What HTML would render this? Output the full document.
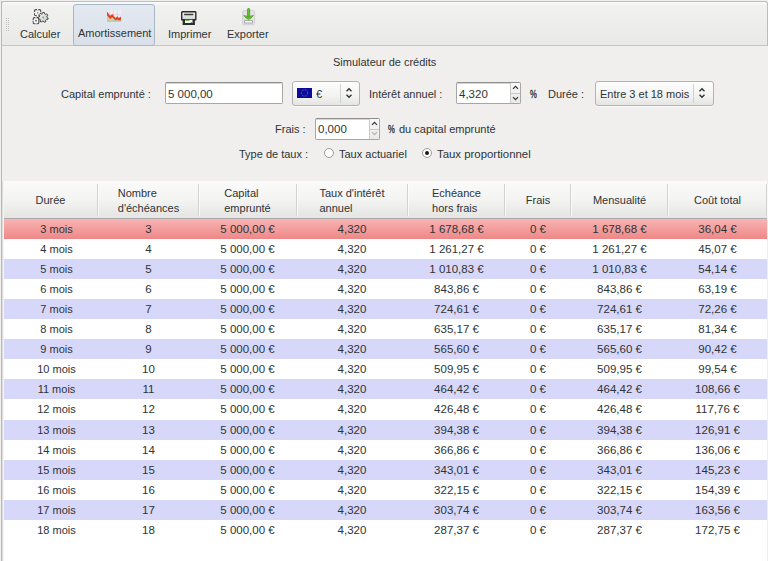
<!DOCTYPE html>
<html><head><meta charset="utf-8">
<style>

*{box-sizing:border-box}
html,body{margin:0;padding:0;width:768px;height:561px;overflow:hidden;background:#f0efed;font-family:"Liberation Sans",sans-serif;font-size:11px;color:#2e3436}
.a{position:absolute}
.t{position:absolute;white-space:nowrap;line-height:13px;font-size:11px}
#win{position:absolute;left:0;top:0;width:768px;height:561px}
#tb{position:absolute;left:1px;top:1px;width:767px;height:45px;border:1px solid #bdbdbd;border-bottom-color:#c6c6c4;border-radius:3px 3px 0 0;background:linear-gradient(#fbfbfb 0,#f1f1f0 4px,#e9e9e8 100%)}
#lline{position:absolute;left:1px;top:1px;width:1px;height:560px;background:#b9b9b9}
.tbtn{position:absolute;top:4px;height:42px;border-radius:3px}
.tbtn.on{border:1px solid #a9b7c9;background:linear-gradient(#e4e9f0,#d9e0ea)}
.entry{position:absolute;background:#fff;border:1px solid #a7a7a5;border-top-color:#8f8f8d;border-radius:2px;box-shadow:inset 0 1px 0 #d6d6d6}
.combo{position:absolute;border:1px solid #b3b3b1;border-radius:3px;background:linear-gradient(#fdfdfd,#f3f3f2 60%,#e4e4e3);box-shadow:0 1px 0 rgba(255,255,255,.6)}
.radio{position:absolute;width:10px;height:10px;border-radius:50%;border:1px solid #9a9a9a;background:#fff}
#tbl{position:absolute;left:2px;top:181px;width:765px;height:380px;background:#fff;border-left:1px solid #dedede;box-shadow:inset 1px 0 0 #f4f4f4}
#hdr{position:absolute;left:4px;top:181px;width:763px;height:38px;background:linear-gradient(#fafafa 0,#f4f4f3 50%,#e4e4e3 100%);border-bottom:1px solid #acaaaa}
.sep{position:absolute;top:184px;width:1px;height:32px;background:#d2d2d0;box-shadow:1px 0 0 rgba(255,255,255,.7)}
.row{position:absolute;left:4px;width:763px;height:20px}
.row.r{background:linear-gradient(#f8b4b4,#ee8787)}
.row.b{background:#d7d7fa}
.c{position:absolute;top:0;height:20px;line-height:20px;text-align:center;white-space:nowrap;padding-top:0}
.num{font-size:11.5px}

</style></head>
<body>
<div id="tb"></div><div id="lline"></div><svg class="a" style="left:5px;top:17px" width="6" height="16"><rect x="1" y="1" width="1" height="1" fill="#c2c2c2"/><rect x="1" y="3" width="1" height="1" fill="#c2c2c2"/><rect x="1" y="5" width="1" height="1" fill="#c2c2c2"/><rect x="1" y="7" width="1" height="1" fill="#c2c2c2"/><rect x="1" y="9" width="1" height="1" fill="#c2c2c2"/><rect x="1" y="11" width="1" height="1" fill="#c2c2c2"/><rect x="1" y="13" width="1" height="1" fill="#c2c2c2"/><rect x="3" y="1" width="1" height="1" fill="#c2c2c2"/><rect x="3" y="3" width="1" height="1" fill="#c2c2c2"/><rect x="3" y="5" width="1" height="1" fill="#c2c2c2"/><rect x="3" y="7" width="1" height="1" fill="#c2c2c2"/><rect x="3" y="9" width="1" height="1" fill="#c2c2c2"/><rect x="3" y="11" width="1" height="1" fill="#c2c2c2"/><rect x="3" y="13" width="1" height="1" fill="#c2c2c2"/></svg><div class="tbtn on" style="left:73px;width:82px"></div><svg class="a" style="left:31px;top:8px" width="18" height="17" viewBox="0 0 18 17">
<defs><linearGradient id="gg" x1="0" y1="0" x2="1" y2="1"><stop offset="0" stop-color="#f2f5f2"/><stop offset="1" stop-color="#c3cbc3"/></linearGradient></defs>
<rect x="3.5" y="1.6" width="6.3" height="6.1" rx="1.5" fill="#f6f6f6" stroke="#4a4a4a" stroke-width="1.1"/>
<path d="M6.65 1 v1.2 M6.65 7.1 v1.2 M2.9 4.65 h1.2 M9.2 4.65 h1.2" stroke="#efefef" stroke-width="1.3"/>
<path d="M6.65 3.9 v1.6 M5.85 4.7 h1.6" stroke="#888" stroke-width="0.8"/>
<rect x="2.2" y="9.6" width="5.6" height="6.2" rx="1.4" fill="#fbfbfb" stroke="#4a4a4a" stroke-width="1.1"/>
<path d="M5 9 v1.2 M5 15.2 v1.2 M1.6 12.7 h1.2" stroke="#efefef" stroke-width="1.2"/>
<circle cx="5" cy="12.7" r="0.9" fill="#666"/>
<path d="M16.10 9.52 L17.16 10.00 L16.64 11.71 L15.48 11.50 L14.54 12.52 L14.83 13.66 L13.16 14.31 L12.60 13.28 L11.22 13.17 L10.51 14.11 L8.96 13.21 L9.42 12.13 L8.64 10.98 L7.47 11.01 L7.20 9.25 L8.33 8.93 L8.74 7.60 L7.99 6.70 L9.20 5.40 L10.15 6.08 L11.45 5.57 L11.68 4.43 L13.46 4.56 L13.52 5.73 L14.72 6.43 L15.76 5.89 L16.77 7.37 L15.89 8.14Z" fill="url(#gg)" stroke="#454545" stroke-width="1" stroke-linejoin="round"/>
<circle cx="12.2" cy="9.4" r="1" fill="#9aa09a"/>
</svg><svg class="a" style="left:106px;top:10px" width="16" height="13" viewBox="0 0 16 13">
<rect x="1" y="0.2" width="14" height="10.5" fill="#f0eef7"/>
<path d="M3.4 0.2v10.4M7.6 0.2v10.4M11.4 0.2v10.4M1 4.6h14" stroke="#d6d2e2" stroke-width="0.7"/>
<path d="M1 5 L4.1 8.8 L6.4 7 L9.4 10.4 L11.4 9.4 L12.5 10.4 L15 10.4 L15 10.7 L1 10.7Z" fill="#c9d39a"/>
<path d="M1 1.6 L4.1 5.8 L6.4 3.9 L9.4 8.1 L11.4 6.2 L12.8 8.1 L15 6.6 L15 10.5 L12.5 10.5 L11.4 9.6 L9.4 10.5 L6.4 7.2 L4.1 9 L1 5.2 Z" fill="#e6421e"/>
<rect x="1" y="10.6" width="14" height="1" fill="#a3a9b3" opacity="0.8"/>
</svg><svg class="a" style="left:180px;top:10px" width="18" height="16" viewBox="0 0 18 16">
<defs><linearGradient id="pg" x1="0" y1="0" x2="0" y2="1"><stop offset="0" stop-color="#f4f4f4"/><stop offset="1" stop-color="#d4d4d4"/></linearGradient></defs>
<path d="M2.6 15 L2.6 8 L14.9 8 L14.9 15 Z" fill="#2c2c2c"/>
<path d="M1.7 2.4 Q1.7 1.8 2.4 1.8 L15.1 1.8 Q15.8 1.8 15.8 2.4 L15.8 9.8 L1.7 9.8 Z" fill="url(#pg)" stroke="#2b2b2b" stroke-width="1.4" stroke-linejoin="round"/>
<rect x="4" y="3.7" width="9.5" height="1.5" rx="0.7" fill="#3a3a3a"/>
<rect x="5" y="9.8" width="7.5" height="3.2" fill="#f6f6f6"/>
<path d="M5.5 10.5 h4" stroke="#74c043" stroke-width="1"/>
<rect x="10.8" y="12" width="1.4" height="1" fill="#4a90d9"/>
</svg><svg class="a" style="left:241px;top:8px" width="15" height="18" viewBox="0 0 15 18">
<rect x="1.6" y="2.5" width="12" height="14.2" rx="1.5" fill="#e2e2e2" stroke="#cfcfcf" stroke-width="0.9"/>
<rect x="3.7" y="12.6" width="7.8" height="2.4" fill="#fbfbfb" stroke="#9c9c9c" stroke-width="0.8"/>
<path d="M7.6 1.6 V9" stroke="#4f9f22" stroke-width="3" stroke-linecap="round"/>
<path d="M7.6 1.6 V9" stroke="#66c032" stroke-width="1.8" stroke-linecap="round"/>
<path d="M2.8 7.4 Q5 8.2 7.6 8.4 Q10.2 8.2 12.4 7.4 Q10.6 10.2 7.6 11.6 Q4.6 10.2 2.8 7.4Z" fill="#62bb2f" stroke="#4a9a1e" stroke-width="0.7"/>
</svg><div class="t" style="left:20px;top:28px;">Calculer</div>
<div class="t" style="left:78px;top:27px;">Amortissement</div>
<div class="t" style="left:168px;top:28px;">Imprimer</div>
<div class="t" style="left:227px;top:28px;">Exporter</div>
<div class="t" style="left:333px;top:56px;">Simulateur de crédits</div>
<div class="t" style="left:61px;top:88px;">Capital emprunté :</div>
<div class="entry" style="left:165px;top:82px;width:118px;height:22px"></div><div class="t" style="left:168px;top:88px;font-size:11.5px">5 000,00</div>
<div class="combo" style="left:292px;top:81px;width:68px;height:25px"></div><svg class="a" style="left:297px;top:88px" width="15" height="10"><rect width="15" height="10" fill="#0b0ba0"/><circle cx="7.5" cy="5" r="3.2" fill="none" stroke="#b8a640" stroke-width="0.7" stroke-dasharray="0.8,0.9"/></svg><div class="t" style="left:316px;top:88px;">€</div>
<div class="a" style="left:340px;top:84px;width:1px;height:19px;background:#d0d0ce"></div><svg class="a" style="left:345px;top:87px" width="9" height="12" viewBox="0 0 9 12"><path d="M1.5 4.3 L4 1.8 L6.5 4.3 M1.5 7.7 L4 10.2 L6.5 7.7" fill="none" stroke="#2e3436" stroke-width="1.4"/></svg><div class="t" style="left:369px;top:88px;">Intérêt annuel :</div>
<div class="entry" style="left:456px;top:82px;width:65px;height:22px"></div><div class="a" style="left:510px;top:83px;width:10px;height:20px;border-left:1px solid #c8c8c6;background:linear-gradient(#f8f8f8,#eaeaea)"></div><div class="a" style="left:511px;top:93px;width:9px;height:1px;background:#c8c8c6"></div><svg class="a" style="left:512px;top:85px" width="7" height="5"><path d="M1 3.8 L3.5 1.3 L6 3.8" fill="none" stroke="#2e3436" stroke-width="1.2"/></svg><svg class="a" style="left:512px;top:96px" width="7" height="5"><path d="M1 1.2 L3.5 3.7 L6 1.2" fill="none" stroke="#2e3436" stroke-width="1.2"/></svg><div class="t" style="left:459px;top:88px;font-size:11.5px">4,320</div>
<div class="t" style="left:530px;top:88px;transform:scaleX(0.7);transform-origin:0 0;-webkit-text-stroke:0.35px #2e3436">%</div>
<div class="t" style="left:548px;top:88px;">Durée :</div>
<div class="combo" style="left:595px;top:81px;width:119px;height:25px"></div><div class="t" style="left:600px;top:88px;">Entre 3 et 18 mois</div>
<div class="a" style="left:693px;top:84px;width:1px;height:19px;background:#d0d0ce"></div><svg class="a" style="left:698px;top:87px" width="9" height="12" viewBox="0 0 9 12"><path d="M1.5 4.3 L4 1.8 L6.5 4.3 M1.5 7.7 L4 10.2 L6.5 7.7" fill="none" stroke="#2e3436" stroke-width="1.4"/></svg><div class="t" style="left:275px;top:123px;">Frais :</div>
<div class="entry" style="left:315px;top:118px;width:65px;height:22px"></div><div class="a" style="left:369px;top:119px;width:10px;height:20px;border-left:1px solid #c8c8c6;background:linear-gradient(#f8f8f8,#eaeaea)"></div><div class="a" style="left:370px;top:129px;width:9px;height:1px;background:#c8c8c6"></div><svg class="a" style="left:371px;top:121px" width="7" height="5"><path d="M1 3.8 L3.5 1.3 L6 3.8" fill="none" stroke="#2e3436" stroke-width="1.2"/></svg><svg class="a" style="left:371px;top:131px" width="7" height="5"><path d="M1 1.2 L3.5 3.7 L6 1.2" fill="none" stroke="#b0b0b0" stroke-width="1.2"/></svg><div class="t" style="left:318px;top:123px;font-size:11.5px">0,000</div>
<div class="t" style="left:388px;top:123px;transform:scaleX(0.7);transform-origin:0 0;-webkit-text-stroke:0.35px #2e3436">%</div>
<div class="t" style="left:399px;top:123px;">du capital emprunté</div>
<div class="t" style="left:239px;top:148px;">Type de taux :</div>
<div class="radio" style="left:324px;top:148px"></div><div class="t" style="left:339px;top:148px;">Taux actuariel</div>
<div class="radio" style="left:422px;top:148px"></div><div class="a" style="left:424.8px;top:150.8px;width:4.4px;height:4.4px;border-radius:50%;background:#1a1a1a"></div><div class="t" style="left:437px;top:148px;font-size:11.4px">Taux proportionnel</div>
<div id="tbl"></div><div id="hdr"></div><div class="sep" style="left:97px"></div><div class="sep" style="left:198px"></div><div class="sep" style="left:296px"></div><div class="sep" style="left:407px"></div><div class="sep" style="left:504px"></div><div class="sep" style="left:570px"></div><div class="sep" style="left:667px"></div><div class="sep" style="left:766px"></div><div class="t" style="left:3px;width:95px;top:194px;text-align:center">Durée</div>
<div class="a" style="left:98px;width:101px;top:186px;display:flex;justify-content:center"><div style="line-height:15px;white-space:nowrap;text-align:left">Nombre<br>d'échéances</div></div>
<div class="a" style="left:199px;width:97px;top:186px;display:flex;justify-content:center"><div style="line-height:15px;white-space:nowrap;text-align:left">Capital<br>emprunté</div></div>
<div class="a" style="left:296px;width:112px;top:186px;display:flex;justify-content:center"><div style="line-height:15px;white-space:nowrap;text-align:left">Taux d'intérêt<br>annuel</div></div>
<div class="a" style="left:408px;width:97px;top:186px;display:flex;justify-content:center"><div style="line-height:15px;white-space:nowrap;text-align:left">Echéance<br>hors frais</div></div>
<div class="t" style="left:505px;width:66px;top:194px;text-align:center">Frais</div>
<div class="t" style="left:571px;width:97px;top:194px;text-align:center">Mensualité</div>
<div class="t" style="left:668px;width:99px;top:194px;text-align:center">Coût total</div>
<div class="row r" style="top:218.75px"></div><div class="c" style="left:15px;width:83px;top:218.75px">3 mois</div>
<div class="c num" style="left:98px;width:101px;top:218.75px">3</div>
<div class="c num" style="left:199px;width:97px;top:218.75px">5 000,00 €</div>
<div class="c num" style="left:296px;width:112px;top:218.75px">4,320</div>
<div class="c num" style="left:408px;width:97px;top:218.75px">1 678,68 €</div>
<div class="c num" style="left:505px;width:66px;top:218.75px">0 €</div>
<div class="c num" style="left:571px;width:97px;top:218.75px">1 678,68 €</div>
<div class="c num" style="left:668px;width:99px;top:218.75px">36,04 €</div>
<div class="row " style="top:238.83px"></div><div class="c" style="left:15px;width:83px;top:238.83px">4 mois</div>
<div class="c num" style="left:98px;width:101px;top:238.83px">4</div>
<div class="c num" style="left:199px;width:97px;top:238.83px">5 000,00 €</div>
<div class="c num" style="left:296px;width:112px;top:238.83px">4,320</div>
<div class="c num" style="left:408px;width:97px;top:238.83px">1 261,27 €</div>
<div class="c num" style="left:505px;width:66px;top:238.83px">0 €</div>
<div class="c num" style="left:571px;width:97px;top:238.83px">1 261,27 €</div>
<div class="c num" style="left:668px;width:99px;top:238.83px">45,07 €</div>
<div class="row b" style="top:258.91px"></div><div class="c" style="left:15px;width:83px;top:258.91px">5 mois</div>
<div class="c num" style="left:98px;width:101px;top:258.91px">5</div>
<div class="c num" style="left:199px;width:97px;top:258.91px">5 000,00 €</div>
<div class="c num" style="left:296px;width:112px;top:258.91px">4,320</div>
<div class="c num" style="left:408px;width:97px;top:258.91px">1 010,83 €</div>
<div class="c num" style="left:505px;width:66px;top:258.91px">0 €</div>
<div class="c num" style="left:571px;width:97px;top:258.91px">1 010,83 €</div>
<div class="c num" style="left:668px;width:99px;top:258.91px">54,14 €</div>
<div class="row " style="top:278.99px"></div><div class="c" style="left:15px;width:83px;top:278.99px">6 mois</div>
<div class="c num" style="left:98px;width:101px;top:278.99px">6</div>
<div class="c num" style="left:199px;width:97px;top:278.99px">5 000,00 €</div>
<div class="c num" style="left:296px;width:112px;top:278.99px">4,320</div>
<div class="c num" style="left:408px;width:97px;top:278.99px">843,86 €</div>
<div class="c num" style="left:505px;width:66px;top:278.99px">0 €</div>
<div class="c num" style="left:571px;width:97px;top:278.99px">843,86 €</div>
<div class="c num" style="left:668px;width:99px;top:278.99px">63,19 €</div>
<div class="row b" style="top:299.07px"></div><div class="c" style="left:15px;width:83px;top:299.07px">7 mois</div>
<div class="c num" style="left:98px;width:101px;top:299.07px">7</div>
<div class="c num" style="left:199px;width:97px;top:299.07px">5 000,00 €</div>
<div class="c num" style="left:296px;width:112px;top:299.07px">4,320</div>
<div class="c num" style="left:408px;width:97px;top:299.07px">724,61 €</div>
<div class="c num" style="left:505px;width:66px;top:299.07px">0 €</div>
<div class="c num" style="left:571px;width:97px;top:299.07px">724,61 €</div>
<div class="c num" style="left:668px;width:99px;top:299.07px">72,26 €</div>
<div class="row " style="top:319.15px"></div><div class="c" style="left:15px;width:83px;top:319.15px">8 mois</div>
<div class="c num" style="left:98px;width:101px;top:319.15px">8</div>
<div class="c num" style="left:199px;width:97px;top:319.15px">5 000,00 €</div>
<div class="c num" style="left:296px;width:112px;top:319.15px">4,320</div>
<div class="c num" style="left:408px;width:97px;top:319.15px">635,17 €</div>
<div class="c num" style="left:505px;width:66px;top:319.15px">0 €</div>
<div class="c num" style="left:571px;width:97px;top:319.15px">635,17 €</div>
<div class="c num" style="left:668px;width:99px;top:319.15px">81,34 €</div>
<div class="row b" style="top:339.23px"></div><div class="c" style="left:15px;width:83px;top:339.23px">9 mois</div>
<div class="c num" style="left:98px;width:101px;top:339.23px">9</div>
<div class="c num" style="left:199px;width:97px;top:339.23px">5 000,00 €</div>
<div class="c num" style="left:296px;width:112px;top:339.23px">4,320</div>
<div class="c num" style="left:408px;width:97px;top:339.23px">565,60 €</div>
<div class="c num" style="left:505px;width:66px;top:339.23px">0 €</div>
<div class="c num" style="left:571px;width:97px;top:339.23px">565,60 €</div>
<div class="c num" style="left:668px;width:99px;top:339.23px">90,42 €</div>
<div class="row " style="top:359.31px"></div><div class="c" style="left:15px;width:83px;top:359.31px">10 mois</div>
<div class="c num" style="left:98px;width:101px;top:359.31px">10</div>
<div class="c num" style="left:199px;width:97px;top:359.31px">5 000,00 €</div>
<div class="c num" style="left:296px;width:112px;top:359.31px">4,320</div>
<div class="c num" style="left:408px;width:97px;top:359.31px">509,95 €</div>
<div class="c num" style="left:505px;width:66px;top:359.31px">0 €</div>
<div class="c num" style="left:571px;width:97px;top:359.31px">509,95 €</div>
<div class="c num" style="left:668px;width:99px;top:359.31px">99,54 €</div>
<div class="row b" style="top:379.39px"></div><div class="c" style="left:15px;width:83px;top:379.39px">11 mois</div>
<div class="c num" style="left:98px;width:101px;top:379.39px">11</div>
<div class="c num" style="left:199px;width:97px;top:379.39px">5 000,00 €</div>
<div class="c num" style="left:296px;width:112px;top:379.39px">4,320</div>
<div class="c num" style="left:408px;width:97px;top:379.39px">464,42 €</div>
<div class="c num" style="left:505px;width:66px;top:379.39px">0 €</div>
<div class="c num" style="left:571px;width:97px;top:379.39px">464,42 €</div>
<div class="c num" style="left:668px;width:99px;top:379.39px">108,66 €</div>
<div class="row " style="top:399.47px"></div><div class="c" style="left:15px;width:83px;top:399.47px">12 mois</div>
<div class="c num" style="left:98px;width:101px;top:399.47px">12</div>
<div class="c num" style="left:199px;width:97px;top:399.47px">5 000,00 €</div>
<div class="c num" style="left:296px;width:112px;top:399.47px">4,320</div>
<div class="c num" style="left:408px;width:97px;top:399.47px">426,48 €</div>
<div class="c num" style="left:505px;width:66px;top:399.47px">0 €</div>
<div class="c num" style="left:571px;width:97px;top:399.47px">426,48 €</div>
<div class="c num" style="left:668px;width:99px;top:399.47px">117,76 €</div>
<div class="row b" style="top:419.55px"></div><div class="c" style="left:15px;width:83px;top:419.55px">13 mois</div>
<div class="c num" style="left:98px;width:101px;top:419.55px">13</div>
<div class="c num" style="left:199px;width:97px;top:419.55px">5 000,00 €</div>
<div class="c num" style="left:296px;width:112px;top:419.55px">4,320</div>
<div class="c num" style="left:408px;width:97px;top:419.55px">394,38 €</div>
<div class="c num" style="left:505px;width:66px;top:419.55px">0 €</div>
<div class="c num" style="left:571px;width:97px;top:419.55px">394,38 €</div>
<div class="c num" style="left:668px;width:99px;top:419.55px">126,91 €</div>
<div class="row " style="top:439.63px"></div><div class="c" style="left:15px;width:83px;top:439.63px">14 mois</div>
<div class="c num" style="left:98px;width:101px;top:439.63px">14</div>
<div class="c num" style="left:199px;width:97px;top:439.63px">5 000,00 €</div>
<div class="c num" style="left:296px;width:112px;top:439.63px">4,320</div>
<div class="c num" style="left:408px;width:97px;top:439.63px">366,86 €</div>
<div class="c num" style="left:505px;width:66px;top:439.63px">0 €</div>
<div class="c num" style="left:571px;width:97px;top:439.63px">366,86 €</div>
<div class="c num" style="left:668px;width:99px;top:439.63px">136,06 €</div>
<div class="row b" style="top:459.71px"></div><div class="c" style="left:15px;width:83px;top:459.71px">15 mois</div>
<div class="c num" style="left:98px;width:101px;top:459.71px">15</div>
<div class="c num" style="left:199px;width:97px;top:459.71px">5 000,00 €</div>
<div class="c num" style="left:296px;width:112px;top:459.71px">4,320</div>
<div class="c num" style="left:408px;width:97px;top:459.71px">343,01 €</div>
<div class="c num" style="left:505px;width:66px;top:459.71px">0 €</div>
<div class="c num" style="left:571px;width:97px;top:459.71px">343,01 €</div>
<div class="c num" style="left:668px;width:99px;top:459.71px">145,23 €</div>
<div class="row " style="top:479.79px"></div><div class="c" style="left:15px;width:83px;top:479.79px">16 mois</div>
<div class="c num" style="left:98px;width:101px;top:479.79px">16</div>
<div class="c num" style="left:199px;width:97px;top:479.79px">5 000,00 €</div>
<div class="c num" style="left:296px;width:112px;top:479.79px">4,320</div>
<div class="c num" style="left:408px;width:97px;top:479.79px">322,15 €</div>
<div class="c num" style="left:505px;width:66px;top:479.79px">0 €</div>
<div class="c num" style="left:571px;width:97px;top:479.79px">322,15 €</div>
<div class="c num" style="left:668px;width:99px;top:479.79px">154,39 €</div>
<div class="row b" style="top:499.87px"></div><div class="c" style="left:15px;width:83px;top:499.87px">17 mois</div>
<div class="c num" style="left:98px;width:101px;top:499.87px">17</div>
<div class="c num" style="left:199px;width:97px;top:499.87px">5 000,00 €</div>
<div class="c num" style="left:296px;width:112px;top:499.87px">4,320</div>
<div class="c num" style="left:408px;width:97px;top:499.87px">303,74 €</div>
<div class="c num" style="left:505px;width:66px;top:499.87px">0 €</div>
<div class="c num" style="left:571px;width:97px;top:499.87px">303,74 €</div>
<div class="c num" style="left:668px;width:99px;top:499.87px">163,56 €</div>
<div class="row " style="top:519.95px"></div><div class="c" style="left:15px;width:83px;top:519.95px">18 mois</div>
<div class="c num" style="left:98px;width:101px;top:519.95px">18</div>
<div class="c num" style="left:199px;width:97px;top:519.95px">5 000,00 €</div>
<div class="c num" style="left:296px;width:112px;top:519.95px">4,320</div>
<div class="c num" style="left:408px;width:97px;top:519.95px">287,37 €</div>
<div class="c num" style="left:505px;width:66px;top:519.95px">0 €</div>
<div class="c num" style="left:571px;width:97px;top:519.95px">287,37 €</div>
<div class="c num" style="left:668px;width:99px;top:519.95px">172,75 €</div>

</body></html>
